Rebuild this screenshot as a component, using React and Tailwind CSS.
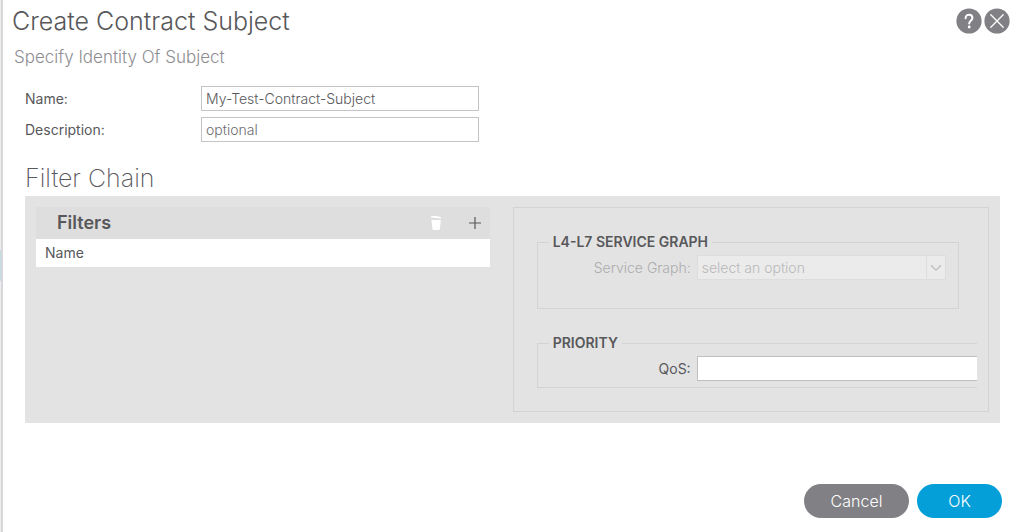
import React from "react";

function TrashIcon() {
  return (
    <svg width="12" height="16" viewBox="0 0 12 16" fill="#fff" aria-hidden="true">
      <path d="M1 1.2 L6 1 L10.8 2 L10.8 3.4 L1 2.4 Z" />
      <path d="M1.4 5 H10.8 L9.9 14 Q9.8 15 8.8 15 H3.6 Q2.6 15 2.5 14 Z" />
    </svg>
  );
}

function PlusIcon() {
  return (
    <svg width="14" height="14" viewBox="0 0 14 14" stroke="#58585b" strokeWidth="1.2" aria-hidden="true">
      <path d="M1 7 H13 M7 1 V13" />
    </svg>
  );
}

function HelpIcon() {
  return (
    <svg width="26" height="26" viewBox="0 0 26 26" fill="none" aria-hidden="true">
      <circle cx="13" cy="13" r="12.6" fill="#808085" />
      <path
        d="M9.6 10.2 C9.6 7.9 11 6.8 13 6.8 C15 6.8 16.4 8 16.4 9.9 C16.4 12.4 13.2 12.6 13.2 15.6"
        stroke="#fff"
        strokeWidth="2"
        strokeLinecap="round"
      />
      <circle cx="13.2" cy="19" r="1.4" fill="#fff" />
    </svg>
  );
}

function CloseIcon() {
  return (
    <svg width="26" height="26" viewBox="0 0 26 26" fill="none" aria-hidden="true">
      <circle cx="13" cy="13" r="12.6" fill="#808085" />
      <path d="M6.8 6.8 L19.2 19.2 M19.2 6.8 L6.8 19.2" stroke="#fff" strokeWidth="1.3" strokeLinecap="round" />
    </svg>
  );
}

function TextRow({ id, label, children }) {
  return (
    <div className="flex h-[25px] items-center">
      <label htmlFor={id} className="w-44 shrink-0">
        {label}
      </label>
      {children}
    </div>
  );
}

const textBox =
  "h-[25px] w-[278px] border border-[#c4c4c6] bg-white px-1 font-light text-[#58585b] placeholder:text-[#6c6c70] placeholder:opacity-100 outline-none";

export default function App() {
  return (
    <div className="flex min-h-screen bg-white font-['Inter','Liberation_Sans',sans-serif] text-[14px] leading-5 text-[#58585b]">
      <div className="w-[3px] shrink-0 border-r-2 border-[#d8d8da] bg-[#ececee] pt-[250px]">
        <div className="h-[31px] bg-[#c2dbe4]" />
      </div>

      <main className="flex min-w-0 flex-1 flex-col">
        <header className="flex items-start justify-between pt-1 pr-[13px] pl-[9px]">
          <div>
            <h1 className="text-[25px] leading-[34px] font-light">Create Contract Subject</h1>
            <h2 className="mt-[7px] pl-0.5 text-[17px] leading-6 font-light text-[#8e8e92]">Specify Identity Of Subject</h2>
          </div>
          <div className="mt-1 flex gap-0.5">
            <button type="button" aria-label="Help">
              <HelpIcon />
            </button>
            <button type="button" aria-label="Close">
              <CloseIcon />
            </button>
          </div>
        </header>

        <form className="flex flex-1 flex-col pr-[23px] pl-[22px]">
          <div className="mt-[17px] flex flex-col gap-1.5">
            <TextRow id="name" label="Name:">
              <input id="name" type="text" defaultValue="My-Test-Contract-Subject" className={textBox} />
            </TextRow>
            <TextRow id="description" label="Description:">
              <input id="description" type="text" placeholder="optional" className={textBox} />
            </TextRow>
          </div>

          <h3 className="mt-[18px] text-[25px] leading-9 font-extralight">Filter Chain</h3>

          <div className="grid grid-cols-[20fr_21fr] gap-[23px] bg-[#e3e3e3] p-[11px]">
            <section>
              <div className="flex h-8 items-center justify-between bg-[#dedede] pr-2 pl-[21px]">
                <h4 className="text-[18px] font-semibold">Filters</h4>
                <div className="flex items-center gap-[26px]">
                  <button type="button" aria-label="Delete filter" disabled>
                    <TrashIcon />
                  </button>
                  <button type="button" aria-label="Add filter">
                    <PlusIcon />
                  </button>
                </div>
              </div>
              <table className="w-full bg-white">
                <thead>
                  <tr>
                    <th scope="col" className="h-7 px-[9px] text-left font-normal">
                      Name
                    </th>
                  </tr>
                </thead>
              </table>
            </section>

            <section className="h-[205px] border border-[#d3d3d4] pt-6 pl-[23px]">
              <fieldset className="mr-[29px] h-[77px] border border-[#d3d3d4] pr-3 pl-[11px]">
                <legend className="px-1 font-semibold">L4-L7 SERVICE GRAPH</legend>
                <div className="flex items-center pt-[3px]">
                  <label htmlFor="service-graph" className="w-[148px] shrink-0 pr-1.5 text-right font-light text-[#acacae]">
                    Service Graph:
                  </label>
                  <div className="relative min-w-0 flex-1">
                    <select
                      id="service-graph"
                      disabled
                      className="block h-[25px] w-full appearance-none border border-[#dddddd] bg-[#ebebeb] px-1 font-light text-[#b8b8ba] opacity-100"
                    >
                      <option>select an option</option>
                    </select>
                    <span className="pointer-events-none absolute inset-y-0 right-0 flex w-5 items-center justify-center border-l border-[#dddddd]">
                      <svg width="12" height="8" viewBox="0 0 12 8" fill="none" stroke="#bebec0" strokeWidth="1.3" aria-hidden="true">
                        <path d="M1 1.2 L6 6.2 L11 1.2" />
                      </svg>
                    </span>
                  </div>
                </div>
              </fieldset>

              <fieldset className="mt-6 mr-[11px] h-[55px] border border-r-0 border-[#d3d3d4] pl-[11px]">
                <legend className="px-1 font-semibold">PRIORITY</legend>
                <div className="flex items-center pt-[3px]">
                  <label htmlFor="qos" className="w-[148px] shrink-0 pr-1.5 text-right">
                    QoS:
                  </label>
                  <select
                    id="qos"
                    className="h-[25px] min-w-0 flex-1 appearance-none border border-r-0 border-[#c0c0c4] bg-white px-1"
                  >
                    <option value=""></option>
                  </select>
                </div>
              </fieldset>
            </section>
          </div>
        </form>

        <footer className="flex justify-end gap-2 pr-[21px] pb-3.5 text-[16px] font-light text-white">
          <button type="button" className="h-[34px] w-[105px] rounded-full bg-[#808085]">
            Cancel
          </button>
          <button type="submit" className="h-[34px] w-[85px] rounded-full bg-[#049fd9]">
            OK
          </button>
        </footer>
      </main>
    </div>
  );
}
